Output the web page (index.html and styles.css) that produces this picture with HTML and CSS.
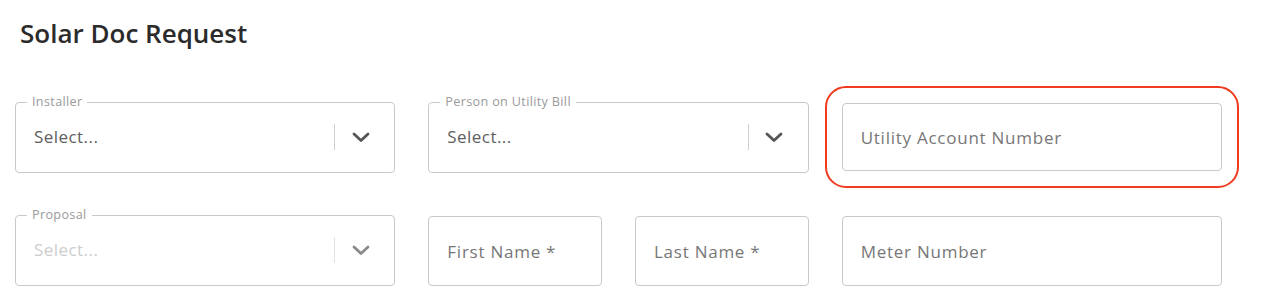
FILE: index.html
```html
<!DOCTYPE html>
<html lang="en">
<head>
<meta charset="utf-8">
<title>Solar Doc Request</title>
<link rel="stylesheet" href="styles.css">
</head>
<body>
<main class="page">
  <h1 class="title">Solar Doc Request</h1>
  <form class="form">
    <div class="row">
      <fieldset class="select">
        <legend class="select-label">Installer</legend>
        <div class="select-control">
          <span class="select-value">Select...</span>
          <span class="select-sep"></span>
          <span class="select-indicator">
            <svg width="18" height="11" viewBox="0 0 18 11"><path d="M2 2 L9 8.6 L16 2" fill="none" stroke="currentColor" stroke-width="2.8" stroke-linecap="round" stroke-linejoin="round"/></svg>
          </span>
        </div>
      </fieldset>
      <fieldset class="select">
        <legend class="select-label">Person on Utility Bill</legend>
        <div class="select-control">
          <span class="select-value">Select...</span>
          <span class="select-sep"></span>
          <span class="select-indicator">
            <svg width="18" height="11" viewBox="0 0 18 11"><path d="M2 2 L9 8.6 L16 2" fill="none" stroke="currentColor" stroke-width="2.8" stroke-linecap="round" stroke-linejoin="round"/></svg>
          </span>
        </div>
      </fieldset>
      <div class="highlight">
        <input class="text-input" type="text" placeholder="Utility Account Number">
      </div>
    </div>
    <div class="row row-2">
      <fieldset class="select select-disabled">
        <legend class="select-label">Proposal</legend>
        <div class="select-control">
          <span class="select-value">Select...</span>
          <span class="select-sep"></span>
          <span class="select-indicator">
            <svg width="18" height="11" viewBox="0 0 18 11"><path d="M2 2 L9 8.6 L16 2" fill="none" stroke="currentColor" stroke-width="2.8" stroke-linecap="round" stroke-linejoin="round"/></svg>
          </span>
        </div>
      </fieldset>
      <div class="name-pair">
        <input class="text-input" type="text" placeholder="First Name *">
        <input class="text-input" type="text" placeholder="Last Name *">
      </div>
      <input class="text-input" type="text" placeholder="Meter Number">
    </div>
  </form>
</main>
</body>
</html>
```

FILE: styles.css
```css
* { box-sizing: border-box; }

html, body {
  margin: 0;
  padding: 0;
  background: #ffffff;
}

body {
  font-family: "Open Sans", "Noto Sans", "Liberation Sans", sans-serif;
  color: #333;
}

.page {
  width: 1265px;
  padding: 16px 43px 0 15px;
}

.title {
  margin: 0 0 45px 5px;
  font-size: 26px;
  line-height: 34px;
  font-weight: 600;
  color: #2b2b2b;
  letter-spacing: 0;
}

.form {
  width: 1207px;
}

.row {
  display: grid;
  grid-template-columns: repeat(3, 1fr);
  column-gap: 33px;
  align-items: end;
}

.row-2 {
  margin-top: 35px;
}

.select {
  margin: 0;
  padding: 0;
  min-inline-size: 0;
  border: 1px solid #c9c9c9;
  border-radius: 4px;
}

.select-label {
  margin-left: 11px;
  padding: 0 5px;
  font-size: 12.6px;
  line-height: 14px;
  letter-spacing: 0.35px;
  color: #9a9a9a;
}

.select-control {
  display: flex;
  align-items: center;
  height: 63px;
  padding-bottom: 7px;
}

.select-value {
  flex: 1;
  padding-left: 18px;
  font-size: 17px;
  line-height: 24px;
  letter-spacing: 0.45px;
  color: #5e5e5e;
}

.select-sep {
  width: 1px;
  height: 26px;
  background: #cfcfcf;
}

.select-indicator {
  width: 51px;
  margin-right: 8px;
  display: flex;
  justify-content: center;
  align-items: center;
  color: #555;
}

.select-indicator svg {
  display: block;
}

.select-disabled .select-value {
  color: #cdcdcd;
}

.select-disabled .select-sep {
  background: #e2e2e2;
}

.select-disabled .select-indicator {
  color: #8a8a8a;
}

.text-input {
  display: block;
  width: 100%;
  height: 70px;
  margin: 0;
  padding: 0 18px;
  border: 1px solid #c9c9c9;
  border-radius: 4px;
  background: #fff;
  font-family: "Open Sans", "Noto Sans", "Liberation Sans", sans-serif;
  font-size: 17px;
  letter-spacing: 0.75px;
  color: #333;
  outline: none;
}

.text-input::placeholder {
  color: #777;
}

.highlight {
  margin-bottom: 2px;
  border-radius: 4px;
  outline: 2px solid #f13b1f;
  outline-offset: 15px;
}

.highlight .text-input {
  height: 68px;
}

.name-pair {
  display: grid;
  grid-template-columns: 1fr 1fr;
  column-gap: 33px;
}
```
